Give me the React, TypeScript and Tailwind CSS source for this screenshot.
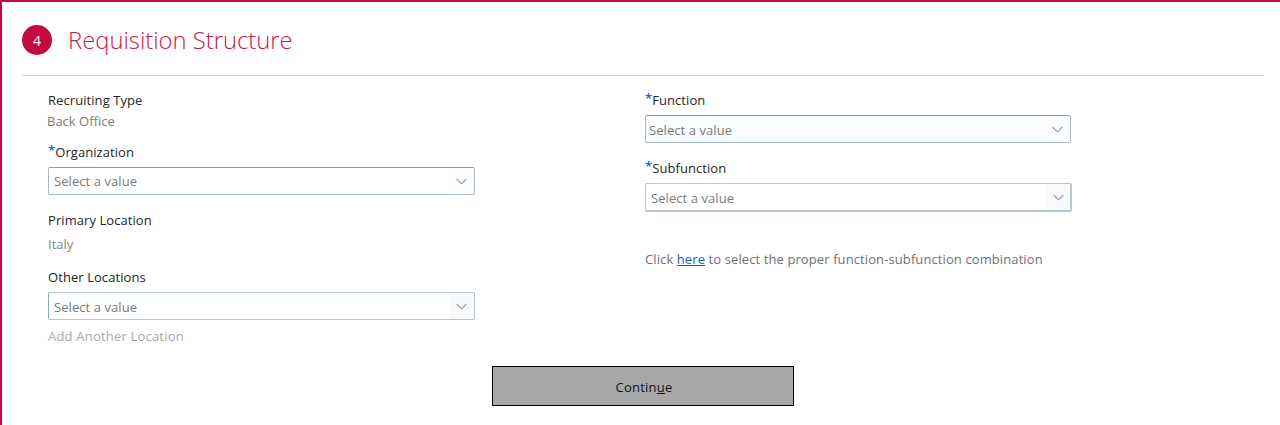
import React from "react";

const font = "font-['Open_Sans','Noto_Sans',sans-serif]";

function Chevron() {
  return (
    <svg width="11" height="7" viewBox="0 0 11 7" fill="none" className="block">
      <path d="M0.7 1 L5.5 5.8 L10.3 1" stroke="#94999c" strokeWidth="1.1" />
    </svg>
  );
}

function Label({ children, req }: { children: React.ReactNode; req?: boolean }) {
  return (
    <div className="h-[20px] text-[13px] leading-[20px] tracking-[0.07px] text-[#262626] whitespace-nowrap">
      {req && <span className="text-[#0572ce] text-[13px] font-semibold relative top-[-2px]">*</span>}
      {children}
    </div>
  );
}

function Select({
  bg = "bg-white",
  btn = "bg-[#fbfcfe]",
  pad = "pl-[5px]",
  wide = "w-[427px]",
  height = "h-[28px]",
  border = "border-[#a9bac3] border-t-[#87a0a8]",
  btnW = "w-[26px]",
  textTop = "pt-[1px]",
}: {
  bg?: string;
  btn?: string;
  pad?: string;
  wide?: string;
  height?: string;
  border?: string;
  btnW?: string;
  textTop?: string;
}) {
  return (
    <div className={`${wide} ${height} ${bg} flex items-stretch border ${border} rounded-[2px]`}>
      <div className={`flex-1 flex items-center ${textTop} ${pad} text-[13px] tracking-[0.07px] text-[#7a7a7a]`}>Select a value</div>
      <div className={`${btnW} ${btn} flex items-center justify-center`}>
        <Chevron />
      </div>
    </div>
  );
}

export default function App() {
  return (
    <div className={`${font} w-[1280px] h-[425px] bg-white border-t-2 border-l-2 border-[#c40b3e] overflow-hidden`}>
      <div className="ml-[20px] mr-[16px] h-[74px] border-b border-[#d0d0d0] flex items-start pt-[23px]">
        <div className="w-[30px] h-[30px] rounded-full bg-[#c40b3e] text-white text-[14px] flex items-center justify-center">4</div>
        <div className="ml-[16px] text-[23.8px] leading-[30px] font-light text-[#c8194b] whitespace-nowrap">Requisition Structure</div>
      </div>
      <div className="flex pt-[14px] pl-[46px]">
        <div className="w-[597px]">
          <Label>Recruiting Type</Label>
          <div className="h-[22px] text-[13px] leading-[22px] text-[#7a7a7a] ml-[-1px]">Back Office</div>
          <div className="mt-[10px]">
            <Label req>Organization</Label>
          </div>
          <div className="mt-[5px]">
            <Select />
          </div>
          <div className="mt-[15px]">
            <Label>Primary Location</Label>
          </div>
          <div className="h-[28px] text-[13px] leading-[28px] text-[#868686]">Italy</div>
          <div className="mt-[9px]">
            <Label>Other Locations</Label>
          </div>
          <div className="mt-[5px]">
            <Select border="border-[#b5c5cc] border-l-[#8fa5ae]" btnW="w-[25px]" btn="bg-[#f7f9fb]" textTop="pt-[3px]" />
          </div>
          <div className="mt-[6px] h-[20px] text-[13px] leading-[20px] tracking-[0.2px] text-[#a8a8a8]">Add Another Location</div>
        </div>
        <div>
          <Label req>Function</Label>
          <div className="mt-[5px]">
            <Select bg="bg-[#f9fcfd]" btn="bg-[#fbfcfe]" pad="pl-[3px]" wide="w-[426px]" textTop="pt-[3px]" />
          </div>
          <div className="mt-[15px]">
            <Label req>Subfunction</Label>
          </div>
          <div className="mt-[5px]">
            <Select border="border-[#b8c6ce] border-r-2 border-b-2" height="h-[29px]" btnW="w-[24px]" btn="bg-[#f7f9fb]" textTop="pt-[3px]" />
          </div>
          <div className="mt-[37px] h-[20px] text-[13px] leading-[20px] tracking-[0.1px] text-[#707070] whitespace-nowrap">
            Click <a className="text-[#0b66c3] underline">here</a> to select the proper function-subfunction combination
          </div>
        </div>
      </div>
      <div className="mt-[20px] ml-[490px] w-[302px] h-[40px] bg-[#a8a8a8] border border-black flex items-center justify-center pt-[3px] pl-[2px] text-[13px] tracking-[0.2px] text-[#111]">
        <span>
          Contin<span className="underline">u</span>e
        </span>
      </div>
    </div>
  );
}
